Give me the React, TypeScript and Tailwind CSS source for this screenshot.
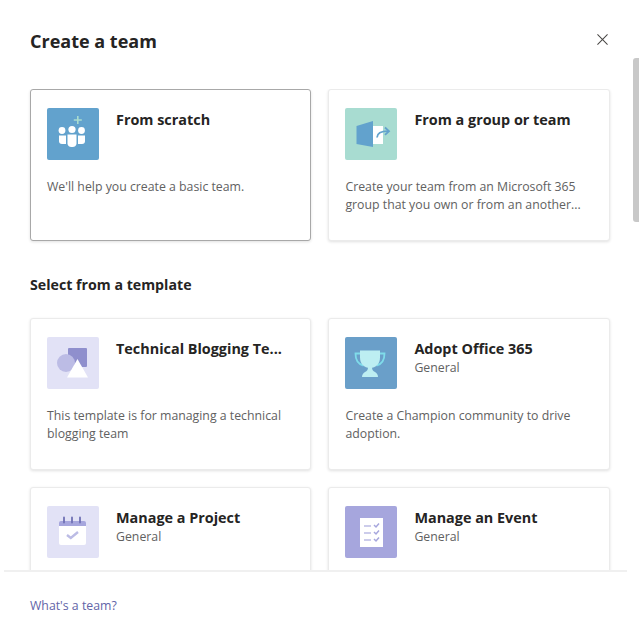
import React from 'react';

const ScratchIcon = () => (
  <svg viewBox="0 0 52 52" className="w-[52px] h-[52px]">
    <rect width="52" height="52" rx="2" fill="#62a2cd" />
    <path d="M30 8h1.600v3.200h3.200v1.600h-3.200V16H30v-3.200h-3.200v-1.600H30z" fill="#a9dccf" />
    <circle cx="15" cy="22.500" r="3.400" fill="#fff" />
    <circle cx="25" cy="21.500" r="3.600" fill="#fff" />
    <circle cx="34.500" cy="22.500" r="3.400" fill="#fff" />
    <path d="M12 27.500h7v8.500h-4a3 3 0 0 1-3-3z" fill="#fff" />
    <path d="M20.500 26.500h9v9.500a4 4 0 0 1-4 3h-1a4 4 0 0 1-4-3z" fill="#fff" />
    <path d="M31 27.500h7v5.500a3 3 0 0 1-3 3h-4z" fill="#fff" />
  </svg>
);

const GroupIcon = () => (
  <svg viewBox="0 0 52 52" className="w-[52px] h-[52px]">
    <rect width="52" height="52" rx="2" fill="#a8dcd1" />
    <rect x="28" y="18" width="10" height="18" fill="#fff" />
    <path d="M11.500 18 28 13v26l-16.500-3z" fill="#62a2cd" />
    <path d="M32 29.500c.3-4.200 3.500-6.300 11-6.300" fill="none" stroke="#62a2cd" strokeWidth="1.800" />
    <path d="m40 19.500 4 3.700-4 3.700" fill="none" stroke="#62a2cd" strokeWidth="1.800" />
  </svg>
);

const ShapesIcon = () => (
  <svg viewBox="0 0 52 52" className="w-[52px] h-[52px]">
    <rect width="52" height="52" rx="2" fill="#e2e2f6" />
    <rect x="21" y="11" width="19" height="19" rx="1" fill="#8f8fcd" />
    <circle cx="19" cy="26" r="9" fill="#bcbce5" />
    <path d="M30.500 22 41 40.500H20z" fill="#fff" />
  </svg>
);

const TrophyIcon = () => (
  <svg viewBox="0 0 52 52" className="w-[52px] h-[52px]">
    <rect width="52" height="52" rx="2" fill="#6a9fc9" />
    <g transform="translate(-1 0)">
      <path d="M17 16.500h-5.500c0 6 1.500 10.500 8 12M35 16.500h5.500c0 6-1.500 10.500-8 12" fill="none" stroke="#7fdcea" strokeWidth="1.800" />
      <path d="M16 13.500h20v7c0 6-4 10.500-10 10.500s-10-4.500-10-10.500z" fill="#bdeef2" />
      <path d="M24 30h4c0 3 1 4 3 5 2 1 3 3 3 5H18c0-2 1-4 3-5 2-1 3-2 3-5z" fill="#bdeef2" />
    </g>
  </svg>
);

const CalendarIcon = () => (
  <svg viewBox="0 0 52 52" className="w-[52px] h-[52px]">
    <rect width="52" height="52" rx="2" fill="#e2e2f6" />
    <path d="M12 20h27v17a2 2 0 0 1-2 2H14a2 2 0 0 1-2-2z" fill="#fff" />
    <path d="M14 15h23a2 2 0 0 1 2 2v3H12v-3a2 2 0 0 1 2-2z" fill="#a6a6dd" />
    <path d="M17 11.500v5M25 11.500v5M33 11.500v5" stroke="#6f70b4" strokeWidth="1.800" strokeLinecap="round" />
    <path d="m20 29 3.800 3 7.200-6" fill="none" stroke="#bcbce5" strokeWidth="2.400" />
  </svg>
);

const ChecklistIcon = () => (
  <svg viewBox="0 0 52 52" className="w-[52px] h-[52px]">
    <rect width="52" height="52" rx="2" fill="#a6a6dd" />
    <rect x="15" y="12" width="23" height="29" fill="#fff" />
    <path d="M19 20h7M19 27h7M19 34h7" stroke="#bcbce5" strokeWidth="1.600" />
    <path d="m29 19 2 2 3-3.500M29 26l2 2 3-3.500M29 33l2 2 3-3.500" fill="none" stroke="#a6a6dd" strokeWidth="1.500" />
  </svg>
);

type CardProps = {
  icon: React.ReactNode;
  title: string;
  sub?: string;
  desc?: string;
  selected?: boolean;
};

const Card = ({ icon, title, sub, desc, selected }: CardProps) => (
  <div
    className={`h-[152px] rounded-[3px] bg-white border px-4 pt-[18px] shadow-[0_1px_3px_rgba(0,0,0,0.12)] ${
      selected ? 'border-[#a8a8a8]' : 'border-[#ebebeb]'
    }`}
  >
    <div className="flex gap-[17px]">
      <div className="shrink-0">{icon}</div>
      <div className="min-w-0 flex-1">
        <div className="text-[14.4px] leading-[20px] font-bold text-[#252423] whitespace-nowrap pt-[2px]">{title}</div>
        {sub && <div className="text-[12.300px] leading-[18px] text-[#616161]">{sub}</div>}
      </div>
    </div>
    <p className="mt-[18px] text-[12.300px] leading-[18px] text-[#616161]">{desc}</p>
  </div>
);

export default function App() {
  return (
    <div className="relative h-[642px] w-[639px] overflow-hidden bg-white font-['Open_Sans',sans-serif]">
      <header className="flex items-start justify-between pl-[30px] pr-[31px] pt-[27px] h-[89px]">
        <h1 className="text-[18px] leading-[28px] font-bold text-[#252423]">Create a team</h1>
        <svg viewBox="0 0 12 12" className="w-[11px] h-[11px] mt-[7px]" fill="none" stroke="#484644" strokeWidth="1.100">
          <path d="M.5.5l11 11M11.500.5l-11 11" />
        </svg>
      </header>

      <div className="h-[481px] overflow-hidden px-[30px]">
        <div className="grid grid-cols-[281px_281.6px] gap-x-[17.4px]">
          <Card selected icon={<ScratchIcon />} title="From scratch" desc="We'll help you create a basic team." />
          <Card
            icon={<GroupIcon />}
            title="From a group or team"
            desc="Create your team from an Microsoft 365 group that you own or from an another..."
          />
        </div>
        <h2 className="mt-[34px] mb-[23px] text-[14.2px] leading-[20px] font-bold text-[#252423]">Select from a template</h2>
        <div className="grid grid-cols-[281px_281.6px] gap-x-[17.4px] gap-y-[17px]">
          <Card
            icon={<ShapesIcon />}
            title="Technical Blogging Te..."
            desc="This template is for managing a technical blogging team"
          />
          <Card
            icon={<TrophyIcon />}
            title="Adopt Office 365"
            sub="General"
            desc="Create a Champion community to drive adoption."
          />
          <Card icon={<CalendarIcon />} title="Manage a Project" sub="General" />
          <Card icon={<ChecklistIcon />} title="Manage an Event" sub="General" />
        </div>
      </div>

      <div className="ml-[4px] mr-[12px] border-t-2 border-[#f0f0f0] bg-white pl-[26px] pt-[25px] h-[72px]">
        <a className="block text-[12.300px] leading-[18px] text-[#6264a7]">What's a team?</a>
      </div>

      {/* overlay scrollbar */}
      <div className="absolute right-0 top-[58px] w-[6px] h-[164px] rounded-l-[3px] bg-[#c8c8c8]" />
    </div>
  );
}
